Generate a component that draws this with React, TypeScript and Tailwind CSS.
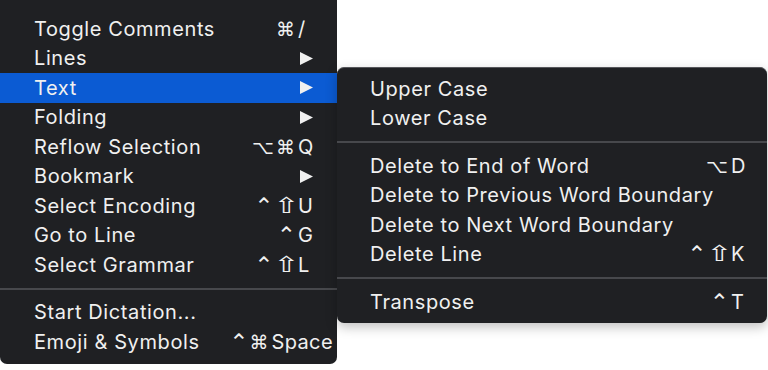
import React from 'react';

type Item =
  | { kind: 'item'; label: string; mods?: string; keyChar?: string; submenu?: boolean; active?: boolean; wide?: boolean }
  | { kind: 'sep' };

const leftItems: Item[] = [
  { kind: 'item', label: 'Toggle Comments', mods: '⌘', keyChar: '/' },
  { kind: 'item', label: 'Lines', submenu: true },
  { kind: 'item', label: 'Text', submenu: true, active: true },
  { kind: 'item', label: 'Folding', submenu: true },
  { kind: 'item', label: 'Reflow Selection', mods: '⌥⌘', keyChar: 'Q' },
  { kind: 'item', label: 'Bookmark', submenu: true },
  { kind: 'item', label: 'Select Encoding', mods: '⌃⇧', keyChar: 'U' },
  { kind: 'item', label: 'Go to Line', mods: '⌃', keyChar: 'G' },
  { kind: 'item', label: 'Select Grammar', mods: '⌃⇧', keyChar: 'L' },
  { kind: 'sep' },
  { kind: 'item', label: 'Start Dictation...' },
  { kind: 'item', label: 'Emoji & Symbols', mods: '⌃⌘', keyChar: 'Space', wide: true },
];

const rightItems: Item[] = [
  { kind: 'item', label: 'Upper Case' },
  { kind: 'item', label: 'Lower Case' },
  { kind: 'sep' },
  { kind: 'item', label: 'Delete to End of Word', mods: '⌥', keyChar: 'D' },
  { kind: 'item', label: 'Delete to Previous Word Boundary' },
  { kind: 'item', label: 'Delete to Next Word Boundary' },
  { kind: 'item', label: 'Delete Line', mods: '⌃⇧', keyChar: 'K' },
  { kind: 'sep' },
  { kind: 'item', label: 'Transpose', mods: '⌃', keyChar: 'T' },
];

// per-glyph sizing so the modifier symbols read like the macOS ones
const modClass: Record<string, string> = {
  '⌘': 'text-[19px] mr-[2px]',
  '⌥': 'text-[19px] mr-[2px]',
  '⌃': 'text-[23px] mr-[1px]',
  '⇧': 'text-[22px] leading-none inline-block scale-x-[1.4] mx-[2px]',
};

function Arrow() {
  return (
    <svg width="13" height="13" viewBox="0 0 13 13" className="mr-[3px]">
      <path d="M0 0 L13 6.5 L0 13 Z" fill="currentColor" />
    </svg>
  );
}

function Row({ item, pl, pr }: { item: Item; pl: string; pr: string }) {
  if (item.kind === 'sep') {
    return <div className="h-[18px] flex items-center"><div className="w-full h-[2px] bg-[#47484c]" /></div>;
  }
  return (
    <div
      className={`h-[29.5px] flex items-center ${pl} ${item.wide ? 'pr-[4px]' : pr} ${item.active ? 'bg-[#0b5bd3]' : ''}`}
    >
      <span className="flex-1 whitespace-nowrap tracking-[0.6px]">{item.label}</span>
      {item.submenu && <Arrow />}
      {item.mods && (
        <span className="flex items-center whitespace-nowrap">
          {item.mods.split('').map((m, i) => (
            <span key={i} className={`font-['DejaVu_Sans',sans-serif] ${modClass[m]}`}>{m}</span>
          ))}
          <span className={`${item.wide ? '' : 'w-[18px]'} text-left ml-[1px] tracking-[0.4px]`}>{item.keyChar}</span>
        </span>
      )}
    </div>
  );
}

export default function App() {
  return (
    <div className="w-[768px] h-[370px] bg-white overflow-hidden flex items-start font-['Inter','DejaVu_Sans',sans-serif] text-[20px] text-[#f0f0f0]">
      <div className="w-[337px] bg-[#1f2023] rounded-b-[7px] pt-[14px] pb-[7px]">
        {leftItems.map((it, i) => (
          <Row key={i} item={it} pl="pl-[34px]" pr="pr-[21px]" />
        ))}
      </div>
      <div className="w-[430px] mt-[67px] bg-[#1f2023] rounded-[7px] border-t border-[#55565a] pt-[6px] pb-[6px] shadow-[0_4px_12px_rgba(0,0,0,0.25)]">
        {rightItems.map((it, i) => (
          <Row key={i} item={it} pl="pl-[33px]" pr="pr-[18px]" />
        ))}
      </div>
    </div>
  );
}
